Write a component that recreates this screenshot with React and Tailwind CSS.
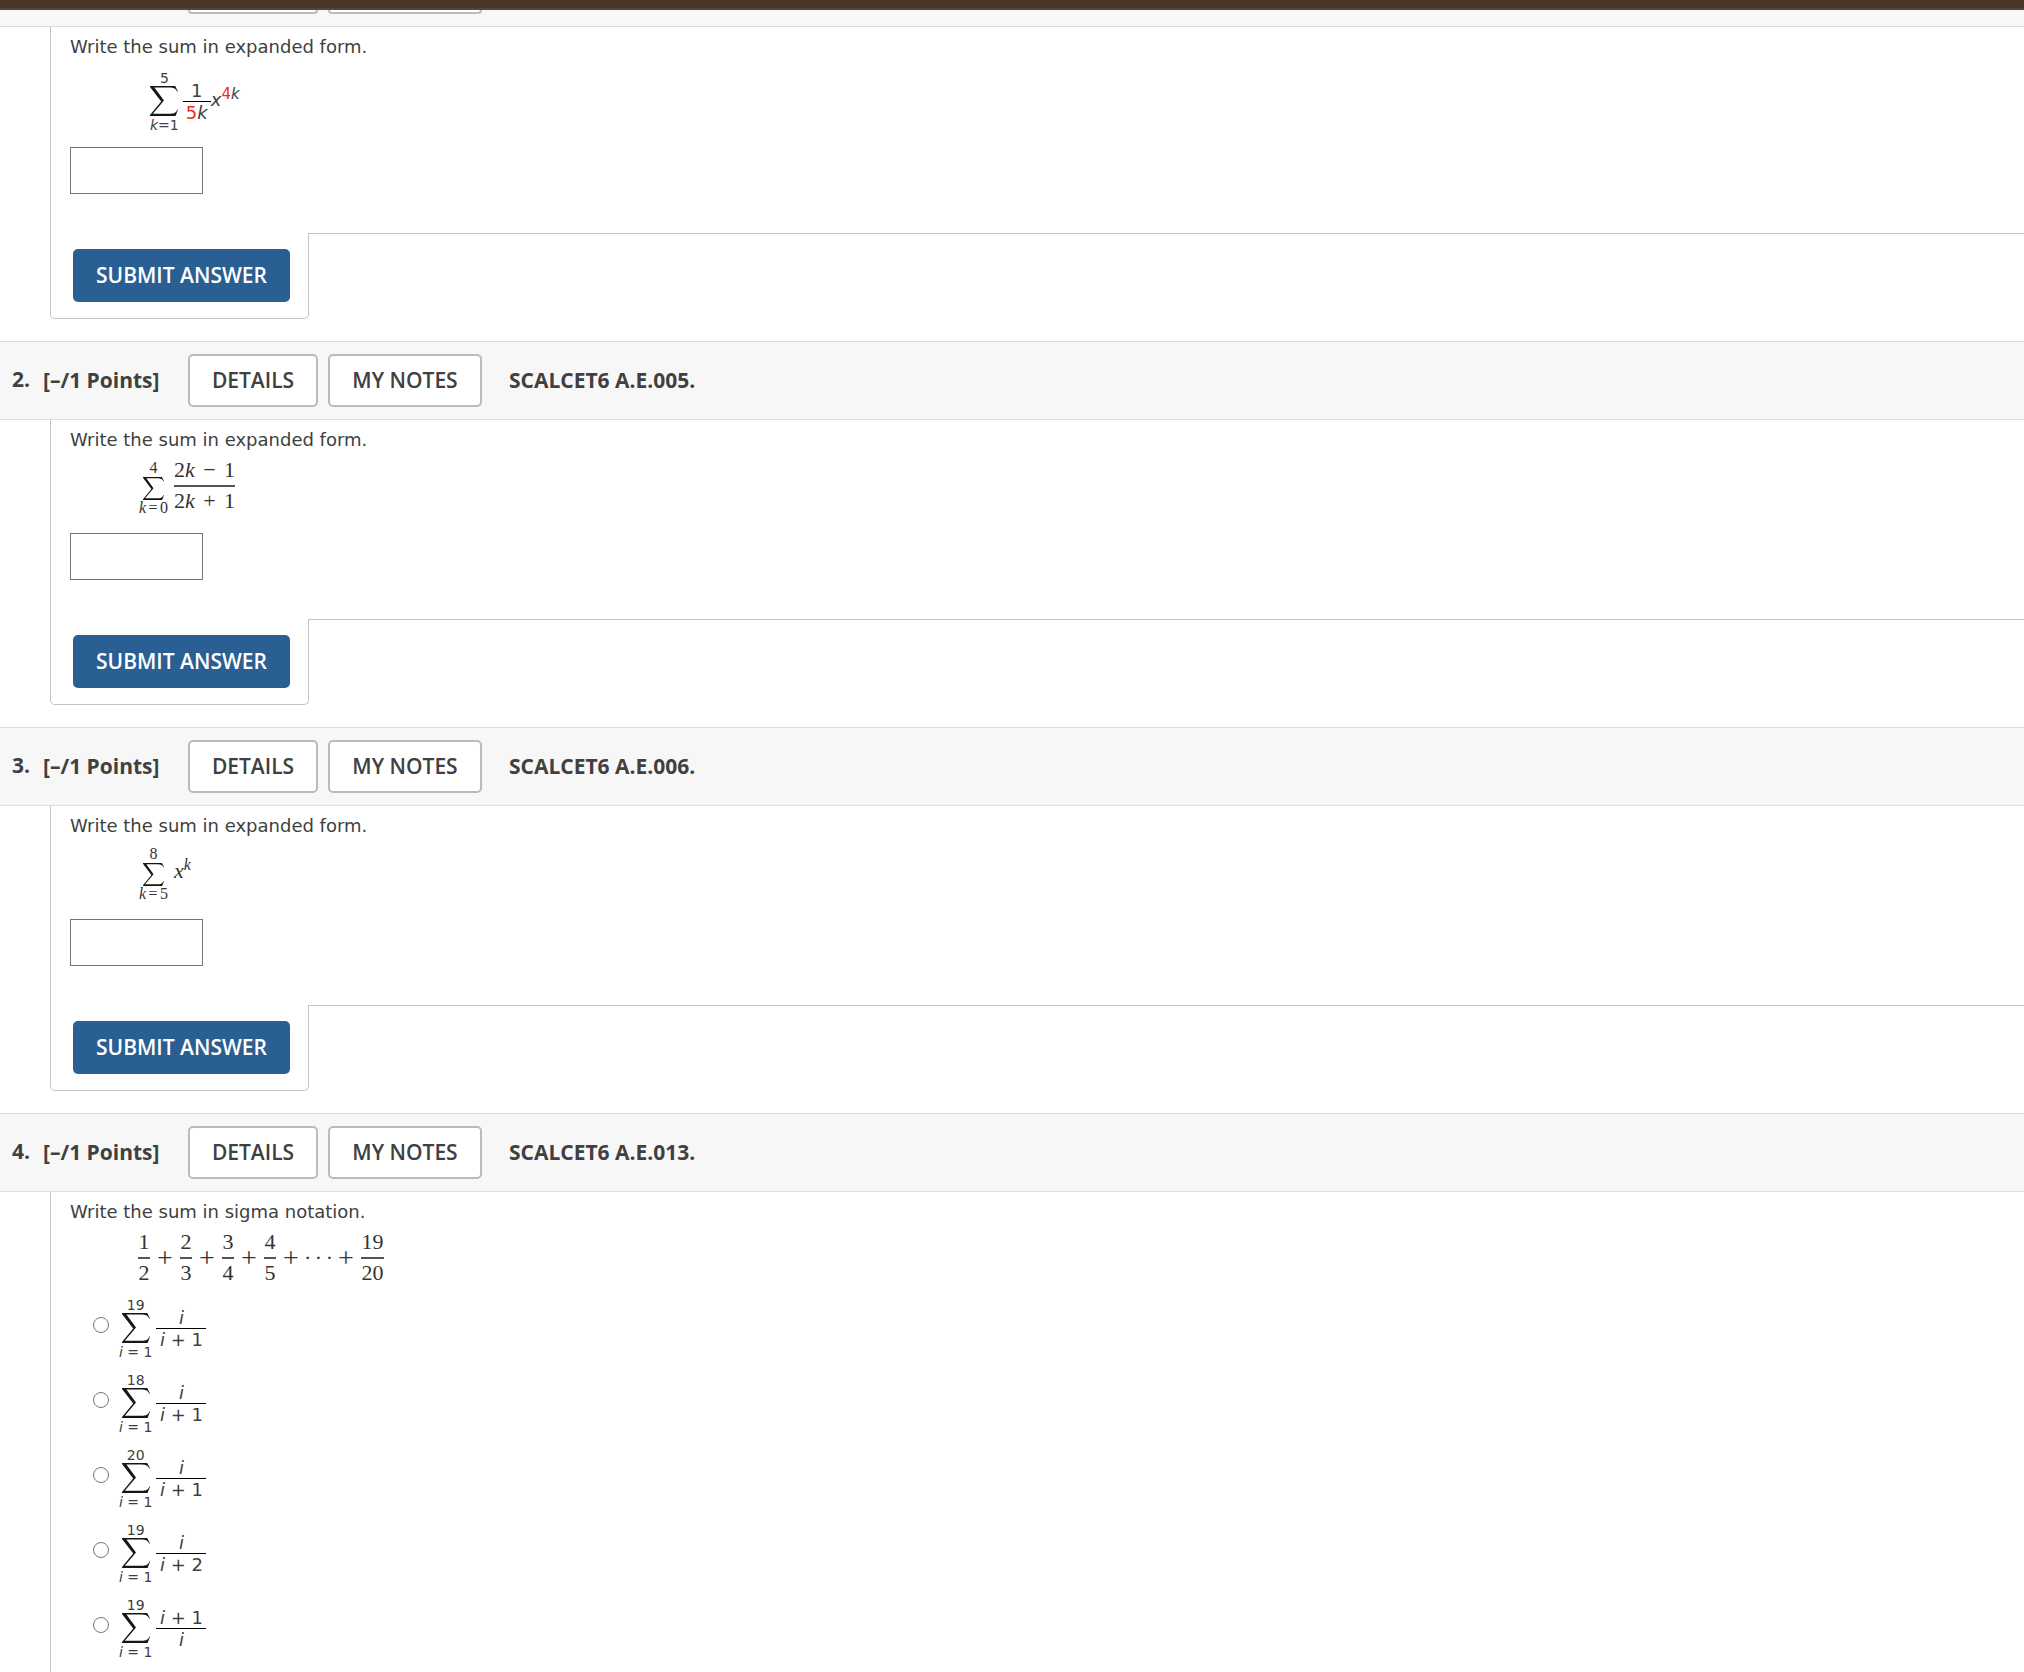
import React from "react";

const SANS = "font-['DejaVu_Sans',sans-serif]";
const SERIF = "font-['Liberation_Serif',serif] text-[#333]";

function Sigma({ className }) {
  return (
    <svg viewBox="0 0 28 30" className={className} aria-hidden="true" preserveAspectRatio="none">
      <path
        d="M0 0H25.2L28 5.6H27.2C26 2.6 24 1.5 20 1.5H4.4L14 14.6L2.8 27.8H21C24.8 27.8 26.4 26 27.4 23.6H28L25.6 30H0V29L11.2 15.6L0 1Z"
        fill="#161616"
      />
    </svg>
  );
}

function Sum({ top, children }) {
  return (
    <span className="flex flex-col items-center pb-px text-sm leading-4">
      <span>{top}</span>
      <Sigma className="mb-px h-[30px] w-7" />
      <span className="whitespace-nowrap">{children}</span>
    </span>
  );
}

function SerifSum({ top, from }) {
  return (
    <span className="flex w-[29px] flex-col items-center pt-0.5 text-base leading-4">
      <span>{top}</span>
      <Sigma className="mt-px h-[23px] w-[21px]" />
      <span className="flex w-full justify-between">
        <i>k</i>
        <span>=</span>
        <span>{from}</span>
      </span>
    </span>
  );
}

function Frac({ num, den, className }) {
  return (
    <span className={`flex flex-col text-center text-lg leading-5 whitespace-nowrap ${className}`}>
      <span>{num}</span>
      <span className="h-px bg-black" />
      <span className="mt-px">{den}</span>
    </span>
  );
}

function SerifFrac({ num, den, className = "" }) {
  return (
    <span className={`flex flex-col text-center text-[22px] leading-6 whitespace-nowrap ${className}`}>
      <span>{num}</span>
      <span className="mt-[3px] mb-0.5 h-0.5 bg-[#555]" />
      <span>{den}</span>
    </span>
  );
}

function LinearTerm({ sign }) {
  return (
    <span className="flex justify-between">
      <span>
        2<i>k</i>
      </span>
      <span>{sign}</span>
      <span>1</span>
    </span>
  );
}

function HeaderButton({ children, className }) {
  return (
    <button
      type="button"
      className={`h-[53px] rounded-[5px] border-2 border-[#bbb] bg-white text-[21px] font-semibold text-[#404040] ${className}`}
    >
      {children}
    </button>
  );
}

function Header({ number, code }) {
  return (
    <header className="flex h-[79px] shrink-0 items-center border-y border-[#ddd] bg-[#f7f7f7] pl-3 text-[21px] font-bold text-[#404040]">
      <span className="mb-0.5 w-[31px]">{number}.</span>
      <span className="w-[145px]">[–/1 Points]</span>
      <HeaderButton className="w-[130px]">DETAILS</HeaderButton>
      <HeaderButton className="ml-2.5 w-[154px]">MY NOTES</HeaderButton>
      <h2 className="ml-[27px]">{code}</h2>
    </header>
  );
}

function HeaderTail() {
  return (
    <header className="flex h-[17px] shrink-0 items-start gap-2.5 border-b border-[#ddd] bg-[#f7f7f7] pl-[188px]">
      <button
        type="button"
        aria-label="Details"
        className="h-1 w-[130px] rounded-b-[5px] border-x-2 border-b-2 border-[#bbb] bg-white"
      />
      <button
        type="button"
        aria-label="My notes"
        className="h-1 w-[154px] rounded-b-[5px] border-x-2 border-b-2 border-[#bbb] bg-white"
      />
    </header>
  );
}

function Submit() {
  return (
    <div className="mb-[22px] ml-[50px] flex">
      <div className="w-[259px] rounded-b-[5px] border-x border-b border-[#c4c4c4] py-4 pl-[22px]">
        <button
          type="button"
          className="block h-[53px] w-[217px] rounded-[5px] bg-[#2a5f94] text-[21px] font-semibold text-white"
        >
          SUBMIT ANSWER
        </button>
      </div>
      <div className="flex-1 border-t border-[#c4c4c4]" />
    </div>
  );
}

function Body({ prompt, children, className = "" }) {
  return (
    <div className={`ml-[50px] border-l border-[#c4c4c4] pt-2 pl-[19px] ${SANS} text-[#404040] ${className}`}>
      <p className="text-lg leading-6">{prompt}</p>
      {children}
    </div>
  );
}

function Question({ prompt, children }) {
  return (
    <>
      <Body prompt={prompt} className="pb-[39px]">
        {children}
        <input
          type="text"
          aria-label="Answer"
          className="block h-[47px] w-[133px] border border-[#767676] bg-white px-2 text-lg outline-none"
        />
      </Body>
      <Submit />
    </>
  );
}

const I = <i>i</i>;
const OPTIONS = [
  { top: "19", num: I, den: <>{I} + 1</> },
  { top: "18", num: I, den: <>{I} + 1</> },
  { top: "20", num: I, den: <>{I} + 1</> },
  { top: "19", num: I, den: <>{I} + 2</> },
  { top: "19", num: <>{I} + 1</>, den: I },
];

const TERMS = [
  [1, 2],
  [2, 3],
  [3, 4],
  [4, 5],
];

function Plus() {
  return <span className="flex w-3.5 justify-center text-[28px] leading-6">+</span>;
}

export default function App() {
  return (
    <main className="flex min-h-screen flex-col bg-white font-['Open_Sans',sans-serif]">
      <div className="h-2.5 shrink-0 border-b-2 border-[#50443b] bg-[#4a3624]" />

      <HeaderTail />
      <Question prompt="Write the sum in expanded form.">
        <div className="mt-[11px] mb-[13px] flex items-center gap-1 pl-20">
          <Sum top="5">
            <i>k</i>=1
          </Sum>
          <span className="flex items-center">
            <Frac
              className="w-7"
              num="1"
              den={
                <>
                  <span className="text-[#ee2b20]">5</span>
                  <i>k</i>
                </>
              }
            />
            <span className="mb-1 text-lg leading-5">
              <i>x</i>
              <sup className="text-[15px] leading-none">
                <span className="text-[#ee2b20]">4</span>
                <i>k</i>
              </sup>
            </span>
          </span>
        </div>
      </Question>

      <Header number={2} code="SCALCET6 A.E.005." />
      <Question prompt="Write the sum in expanded form.">
        <div className={`mt-1.5 mb-[17px] flex items-start gap-1.5 pl-[69px] ${SERIF}`}>
          <SerifSum top="4" from="0" />
          <SerifFrac className="w-[61px]" num={<LinearTerm sign="−" />} den={<LinearTerm sign="+" />} />
        </div>
      </Question>

      <Header number={3} code="SCALCET6 A.E.006." />
      <Question prompt="Write the sum in expanded form.">
        <div className={`mt-1.5 mb-[17px] flex items-center gap-1.5 pl-[69px] ${SERIF}`}>
          <SerifSum top="8" from="5" />
          <i className="mb-1 text-[22px] leading-6">
            x<sup className="text-base leading-none">k</sup>
          </i>
        </div>
      </Question>

      <Header number={4} code="SCALCET6 A.E.013." />
      <Body prompt="Write the sum in sigma notation." className="flex-1">
        <div className={`mt-1.5 flex items-center gap-2 pl-[68px] ${SERIF}`}>
          {TERMS.map(([n, d]) => (
            <React.Fragment key={n}>
              <SerifFrac className="w-3" num={n} den={d} />
              <Plus />
            </React.Fragment>
          ))}
          <span className="-mx-0.5 flex w-[29px] justify-between text-[22px] leading-6">
            <span>·</span>
            <span>·</span>
            <span>·</span>
          </span>
          <Plus />
          <SerifFrac className="w-[23px]" num="19" den="20" />
        </div>
        <fieldset className="mt-3 flex flex-col gap-[11px] pl-[23px]">
          {OPTIONS.map((o, idx) => (
            <label key={idx} className="flex items-center">
              <input
                type="radio"
                name="q4"
                className="mr-2.5 mb-2 size-4 appearance-none rounded-full border border-[#767676] bg-white checked:border-4"
              />
              <Sum top={o.top}>{I} = 1</Sum>
              <Frac className="ml-1 w-[50px]" num={o.num} den={o.den} />
            </label>
          ))}
        </fieldset>
      </Body>
    </main>
  );
}
